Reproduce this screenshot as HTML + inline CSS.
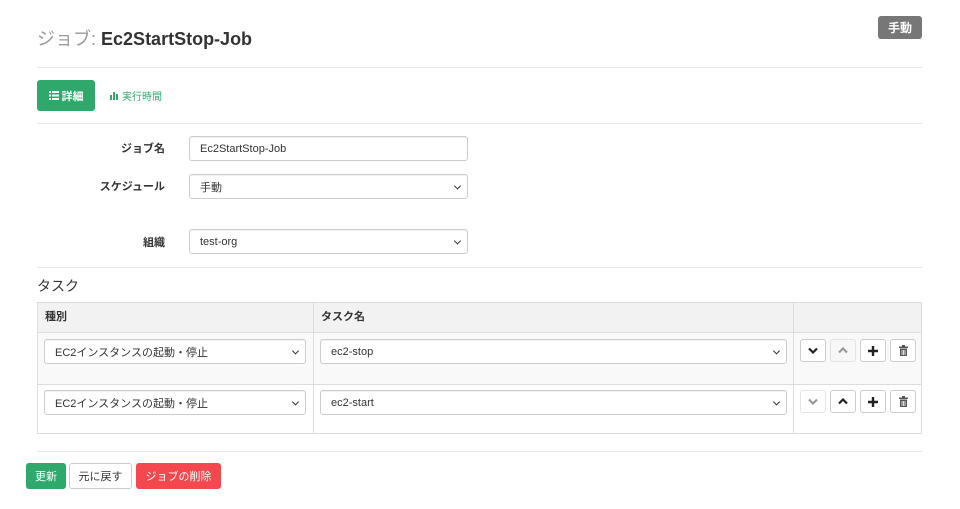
<!DOCTYPE html>
<html><head><meta charset="utf-8"><style>
body{margin:0;width:960px;height:509px;background:#fff;font-family:"Liberation Sans","Noto Sans CJK JP",sans-serif;color:#333;position:relative;overflow:hidden}
.a{position:absolute}
.hr{position:absolute;left:37px;width:885px;height:1px;background:#e8e8e8}
.lbl{position:absolute;width:128px;text-align:right;left:37px;font-size:11px;font-weight:bold}
.inp{position:absolute;border:1px solid #ccc;border-radius:3px;background:#fff;font-size:11px;box-sizing:border-box;padding-left:10px;display:flex;align-items:center;box-shadow:inset 0 1px 1px rgba(0,0,0,.06)}
.sel::after{content:"";position:absolute;right:7px;top:50%;width:4px;height:4px;border-right:1.8px solid #333;border-bottom:1.8px solid #333;transform:translateY(-70%) rotate(45deg)}
.ib{position:absolute;width:26px;height:23px;border:1px solid #ccc;border-radius:3px;background:#fff;box-sizing:border-box;display:flex;align-items:center;justify-content:center}
.btn{position:absolute;top:463px;height:26px;border-radius:3px;font-size:11px;display:flex;align-items:center;justify-content:center;box-sizing:border-box}
</style></head><body>
<div class="a" style="left:37px;top:25px;font-size:18px;"><span style="color:#999">ジョブ:</span> <b style="color:#333">Ec2StartStop-Job</b></div>
<div class="a" style="left:878px;top:16px;width:44px;height:23px;background:#777;color:#fff;border-radius:3px;font-size:12px;font-weight:bold;display:flex;align-items:center;justify-content:center">手動</div>
<div class="hr" style="top:67px"></div>
<div class="a" style="left:37px;top:80px;width:58px;height:31px;background:#2ea86b;border-radius:3px;color:#fff;font-size:11px;font-weight:bold;display:flex;align-items:center;justify-content:center"><svg width="10" height="9" style="margin-right:3px"><g fill="#fff"><rect x="0" y="0" width="2" height="2"/><rect x="3" y="0" width="7" height="2"/><rect x="0" y="3.5" width="2" height="2"/><rect x="3" y="3.5" width="7" height="2"/><rect x="0" y="7" width="2" height="2"/><rect x="3" y="7" width="7" height="2"/></g></svg>詳細</div>
<div class="a" style="left:110px;top:88px;font-size:10px;color:#2ea86b;display:flex;align-items:center"><svg width="9" height="9" style="margin-right:3px"><g fill="#2ea86b"><rect x="0" y="4" width="2" height="5"/><rect x="3" y="1" width="2" height="8"/><rect x="6" y="3" width="2" height="6"/></g></svg>実行時間</div>
<div class="hr" style="top:123px"></div>
<div class="lbl" style="top:140px">ジョブ名</div>
<div class="inp" style="left:189px;top:136px;width:279px;height:25px">Ec2StartStop-Job</div>
<div class="lbl" style="top:178px">スケジュール</div>
<div class="inp sel" style="left:189px;top:174px;width:279px;height:25px">手動</div>
<div class="lbl" style="top:234px">組織</div>
<div class="inp sel" style="left:189px;top:229px;width:279px;height:25px">test-org</div>
<div class="hr" style="top:267px"></div>
<div class="a" style="left:37px;top:276px;font-size:14px">タスク</div>
<div class="a" style="left:37px;top:302px;width:885px;height:132px;border:1px solid #ddd;box-sizing:border-box">
 <div class="a" style="left:0;top:0;width:883px;height:29px;background:#f2f2f2;border-bottom:1px solid #ddd"></div>
 <div class="a" style="left:0;top:30px;width:883px;height:51px;background:#f9f9f9;border-bottom:1px solid #ddd"></div>
 <div class="a" style="left:275px;top:0;width:1px;height:130px;background:#ddd"></div>
 <div class="a" style="left:755px;top:0;width:1px;height:130px;background:#ddd"></div>
 <div class="a" style="left:7px;top:5px;font-size:11px;font-weight:bold">種別</div>
 <div class="a" style="left:283px;top:5px;font-size:11px;font-weight:bold">タスク名</div>
</div>
<div class="inp sel" style="left:44px;top:339px;width:262px;height:25px">EC2インスタンスの起動・停止</div>
<div class="inp sel" style="left:320px;top:339px;width:467px;height:25px">ec2-stop</div>
<div class="inp sel" style="left:44px;top:390px;width:262px;height:25px">EC2インスタンスの起動・停止</div>
<div class="inp sel" style="left:320px;top:390px;width:467px;height:25px">ec2-start</div>
<div class="ib" style="left:800px;top:339px"><svg width="10" height="7"><path d="M1 1.5l4 4 4-4" stroke="#222" stroke-width="2.2" fill="none"/></svg></div>
<div class="ib" style="left:830px;top:339px;background:#f7f7f7;border-color:#e4e4e4"><svg width="10" height="7"><path d="M1 5.5l4-4 4 4" stroke="#999" stroke-width="2.2" fill="none"/></svg></div>
<div class="ib" style="left:860px;top:339px"><svg width="10" height="10"><path d="M5 0v10M0 5h10" stroke="#222" stroke-width="2.4"/></svg></div>
<div class="ib" style="left:890px;top:339px"><svg width="9" height="11"><g fill="#555"><rect x="0" y="1.5" width="9" height="1.5"/><rect x="3" y="0" width="3" height="1.5"/><rect x="1" y="3.5" width="7" height="7.5"/></g><g stroke="#fff" stroke-width="0.8"><path d="M3 5v5M4.5 5v5M6 5v5"/></g></svg></div>
<div class="ib" style="left:800px;top:390px;border-color:#e4e4e4"><svg width="10" height="7"><path d="M1 1.5l4 4 4-4" stroke="#999" stroke-width="2.2" fill="none"/></svg></div>
<div class="ib" style="left:830px;top:390px"><svg width="10" height="7"><path d="M1 5.5l4-4 4 4" stroke="#222" stroke-width="2.2" fill="none"/></svg></div>
<div class="ib" style="left:860px;top:390px"><svg width="10" height="10"><path d="M5 0v10M0 5h10" stroke="#222" stroke-width="2.4"/></svg></div>
<div class="ib" style="left:890px;top:390px"><svg width="9" height="11"><g fill="#555"><rect x="0" y="1.5" width="9" height="1.5"/><rect x="3" y="0" width="3" height="1.5"/><rect x="1" y="3.5" width="7" height="7.5"/></g><g stroke="#fff" stroke-width="0.8"><path d="M3 5v5M4.5 5v5M6 5v5"/></g></svg></div>
<div class="hr" style="top:451px"></div>
<div class="btn" style="left:26px;width:40px;background:#2ea86b;color:#fff">更新</div>
<div class="btn" style="left:69px;width:63px;background:#fff;border:1px solid #ccc;color:#333">元に戻す</div>
<div class="btn" style="left:136px;width:85px;background:#f5474e;color:#fff">ジョブの削除</div>
</body></html>
